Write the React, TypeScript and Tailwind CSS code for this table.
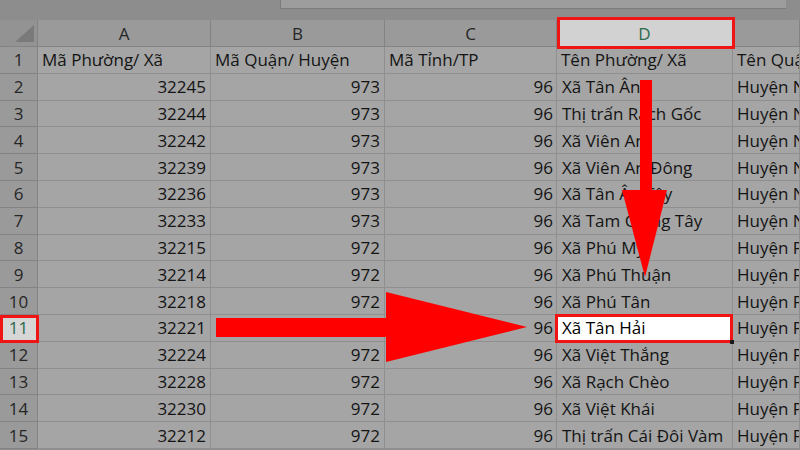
import React from "react";

const rows: [string, string, string, string, string][] = [
  ["32245", "973", "96", "Xã Tân Ân", "Huyện Ngọc Hiển"],
  ["32244", "973", "96", "Thị trấn Rạch Gốc", "Huyện Ngọc Hiển"],
  ["32242", "973", "96", "Xã Viên An", "Huyện Ngọc Hiển"],
  ["32239", "973", "96", "Xã Viên An Đông", "Huyện Ngọc Hiển"],
  ["32236", "973", "96", "Xã Tân Ân Tây", "Huyện Ngọc Hiển"],
  ["32233", "973", "96", "Xã Tam Giang Tây", "Huyện Ngọc Hiển"],
  ["32215", "972", "96", "Xã Phú Mỹ", "Huyện Phú Tân"],
  ["32214", "972", "96", "Xã Phú Thuận", "Huyện Phú Tân"],
  ["32218", "972", "96", "Xã Phú Tân", "Huyện Phú Tân"],
  ["32221", "972", "96", "Xã Tân Hải", "Huyện Phú Tân"],
  ["32224", "972", "96", "Xã Việt Thắng", "Huyện Phú Tân"],
  ["32228", "972", "96", "Xã Rạch Chèo", "Huyện Phú Tân"],
  ["32230", "972", "96", "Xã Việt Khái", "Huyện Phú Tân"],
  ["32212", "972", "96", "Thị trấn Cái Đôi Vàm", "Huyện Phú Tân"],
];

const cell =
  "h-[26.8px] border-r border-b border-[#8f8f8f] bg-[#a5a5a5] flex items-center overflow-hidden whitespace-nowrap text-[#141414]";
const rowHead =
  "h-[26.8px] border-r border-b border-[#838383] bg-[#9a9a9a] flex items-center justify-center text-[#262626]";
const colHead =
  "h-[27px] border-r border-b border-[#838383] bg-[#9a9a9a] flex items-center justify-center text-[#262626]";

export default function App() {
  return (
    <div
      className="relative w-[800px] h-[450px] overflow-hidden bg-[#8d8d8d] text-[17px] leading-none"
      style={{ fontFamily: '"Open Sans", "Noto Sans", sans-serif' }}
    >
      {/* formula bar strip */}
      <div className="flex h-[20px]">
        <div className="w-[280px]" />
        <div className="w-[506px] h-[9px] bg-[#9d9d9d] border-l border-b border-[#7c7c7c]" />
        <div className="flex-1" />
      </div>

      <div className="grid grid-cols-[38px_173px_174px_172px_176px_1fr]">
        {/* header row */}
        <div className="h-[27px] border-r border-b border-[#838383] bg-[#939393] flex items-end justify-end pr-[3px] pb-[4px]">
          <svg width="19" height="17" viewBox="0 0 19 17">
            <polygon points="19,0 19,17 0,17" fill="#7a7a7a" />
          </svg>
        </div>
        <div className={colHead}>A</div>
        <div className={colHead}>B</div>
        <div className={colHead}>C</div>
        <div className={colHead + " !bg-[#d2d2d2] !text-[#2b6a4c]"}>D</div>
        <div className={colHead}></div>

        {/* row 1 */}
        <div className={rowHead}>1</div>
        <div className={cell + " pl-[4px]"}>Mã Phường/ Xã</div>
        <div className={cell + " pl-[4px]"}>Mã Quận/ Huyện</div>
        <div className={cell + " pl-[4px]"}>Mã Tỉnh/TP</div>
        <div className={cell + " pl-[4px]"}>Tên Phường/ Xã</div>
        <div className={cell + " pl-[4px]"}>Tên Quận/ Huyện</div>

        {rows.map((r, i) => {
          const n = i + 2;
          const sel = n === 11;
          return (
            <React.Fragment key={n}>
              <div className={rowHead + (sel ? " !bg-[#d6d6d6] !text-[#2b6a4c]" : "")}>{n}</div>
              <div className={cell + " justify-end pr-[4px]"}>{r[0]}</div>
              <div className={cell + " justify-end pr-[4px]"}>{r[1]}</div>
              <div className={cell + " justify-end pr-[3px]"}>{r[2]}</div>
              <div className={cell + " pl-[5px]" + (sel ? " !bg-white !text-black" : "")}>{r[3]}</div>
              <div className={cell + " pl-[4px]"}>{r[4]}</div>
            </React.Fragment>
          );
        })}
      </div>

      {/* highlight boxes */}
      <div className="absolute left-[557px] top-[17px] w-[178px] h-[32px] border-[3px] border-[#f01414]" />
      <div className="absolute left-0 top-[315px] w-[39px] h-[28px] border-[3px] border-[#f01414]" />
      <div className="absolute left-[555px] top-[314px] w-[178px] h-[29px] border-[3px] border-[#f01414]" />
      <div className="absolute left-[730px] top-[340px] w-[4px] h-[4px] bg-[#1a1a1a]" />

      {/* arrows */}
      <svg className="absolute left-0 top-0" width="800" height="450" viewBox="0 0 800 450">
        <rect x="640" y="80" width="12" height="112" fill="#ff0000" />
        <polygon points="622,190 667,190 645,277" fill="#ff0000" />
        <rect x="216" y="318" width="172" height="19" fill="#ff0000" />
        <polygon points="386,292 386,362 527,327" fill="#ff0000" />
      </svg>
    </div>
  );
}
